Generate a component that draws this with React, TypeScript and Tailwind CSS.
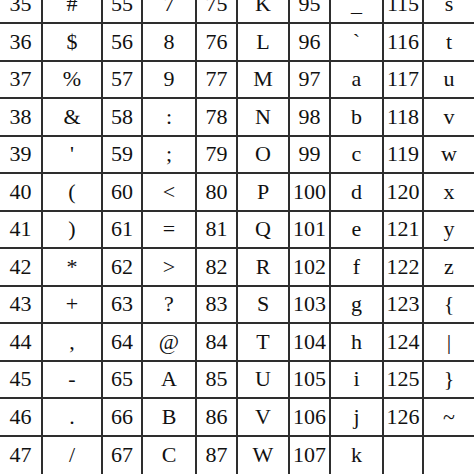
const widths = [
  'w-[43px]',
  'w-[60px]',
  'w-[40px]',
  'w-[54px]',
  'w-[41px]',
  'w-[52px]',
  'w-[41px]',
  'w-[53px]',
  'w-[40px]',
  'flex-1',
]

const starts = [35, 55, 75, 95, 115]

function charFor(code: number) {
  if (code >= 127) return ''
  return String.fromCharCode(code)
}

export default function App() {
  const rows = Array.from({ length: 13 }, (_, i) => i)

  return (
    <div className="w-[474px] h-[474px] overflow-hidden bg-white text-[#111] antialiased font-['Liberation_Serif','Times_New_Roman',serif] text-[22px]">
      <div className="-mt-[13.5px]">
        {rows.map((i) => {
          const cells: string[] = []
          starts.forEach((s) => {
            const code = s + i
            cells.push(code >= 127 ? '' : String(code))
            cells.push(charFor(code))
          })
          const last = i === rows.length - 1
          return (
            <div
              key={i}
              className={`flex h-[37.5px] ${last ? '' : 'border-b-2 border-[#2e2e2e]'}`}
            >
              {cells.map((text, j) => (
                <div
                  key={j}
                  className={`${widths[j]} flex items-center justify-center leading-none ${
                    j < cells.length - 1 ? 'border-r-2 border-[#2e2e2e]' : ''
                  }`}
                >
                  {text}
                </div>
              ))}
            </div>
          )
        })}
      </div>
    </div>
  )
}
